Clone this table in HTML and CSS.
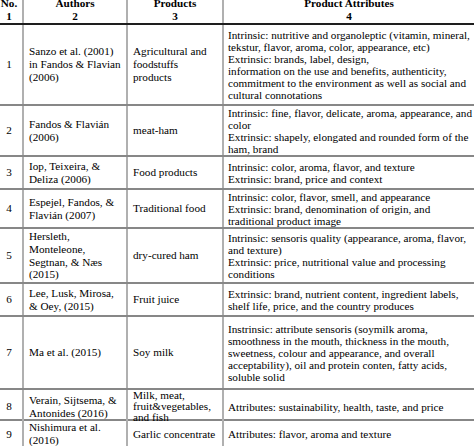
FILE: index.html
```html
<!DOCTYPE html>
<html>
<head>
<meta charset="utf-8">
<link rel="stylesheet" href="styles.css">
</head>
<body>
<div class="table">
  <div class="row head">
    <div class="cell num">No.<br>1</div>
    <div class="cell">Authors<br>2</div>
    <div class="cell">Products<br>3</div>
    <div class="cell">Product Attributes<br>4</div>
  </div>
  <div class="row r1">
    <div class="cell num">1</div>
    <div class="cell">Sanzo et al. (2001)<br>in Fandos &amp; Flavian<br>(2006)</div>
    <div class="cell">Agricultural and<br>foodstuffs<br>products</div>
    <div class="cell attr">Intrinsic: nutritive and organoleptic (vitamin, mineral,<br>tekstur, flavor, aroma, color, appearance, etc)<br>Extrinsic: brands, label, design,<br>information on the use and benefits, authenticity,<br>commitment to the environment as well as social and<br>cultural connotations</div>
  </div>
  <div class="row r2">
    <div class="cell num">2</div>
    <div class="cell">Fandos &amp; Flavián<br>(2006)</div>
    <div class="cell">meat-ham</div>
    <div class="cell attr">Intrinsic: fine, flavor, delicate, aroma, appearance, and<br>color<br>Extrinsic: shapely, elongated and rounded form of the<br>ham, brand</div>
  </div>
  <div class="row r3">
    <div class="cell num">3</div>
    <div class="cell">Iop, Teixeira, &amp;<br>Deliza (2006)</div>
    <div class="cell">Food products</div>
    <div class="cell attr">Intrinsic: color, aroma, flavor, and texture<br>Extrinsic: brand, price and context</div>
  </div>
  <div class="row r4">
    <div class="cell num">4</div>
    <div class="cell">Espejel, Fandos, &amp;<br>Flavián (2007)</div>
    <div class="cell">Traditional food</div>
    <div class="cell attr">Intrinsic: color, flavor, smell, and appearance<br>Extrinsic: brand, denomination of origin, and<br>traditional product image</div>
  </div>
  <div class="row r5">
    <div class="cell num">5</div>
    <div class="cell">Hersleth,<br>Monteleone,<br>Segtnan, &amp; Næs<br>(2015)</div>
    <div class="cell">dry-cured ham</div>
    <div class="cell attr">Intrinsic: sensoris quality (appearance, aroma, flavor,<br>and texture)<br>Extrinsic: price, nutritional value and processing<br>conditions</div>
  </div>
  <div class="row r6">
    <div class="cell num">6</div>
    <div class="cell">Lee, Lusk, Mirosa,<br>&amp; Oey, (2015)</div>
    <div class="cell">Fruit juice</div>
    <div class="cell attr">Extrinsic: brand, nutrient content, ingredient labels,<br>shelf life, price, and the country produces</div>
  </div>
  <div class="row r7">
    <div class="cell num">7</div>
    <div class="cell">Ma et al. (2015)</div>
    <div class="cell">Soy milk</div>
    <div class="cell attr">Instrinsic: attribute sensoris (soymilk aroma,<br>smoothness in the mouth, thickness in the mouth,<br>sweetness, colour and appearance, and overall<br>acceptability), oil and protein conten, fatty acids,<br>soluble solid</div>
  </div>
  <div class="row r8">
    <div class="cell num">8</div>
    <div class="cell">Verain, Sijtsema, &amp;<br>Antonides (2016)</div>
    <div class="cell tight">Milk, meat,<br>fruit&amp;vegetables,<br>and fish</div>
    <div class="cell attr">Attributes: sustainability, health, taste, and price</div>
  </div>
  <div class="row r9">
    <div class="cell num">9</div>
    <div class="cell">Nishimura et al.<br>(2016)</div>
    <div class="cell">Garlic concentrate</div>
    <div class="cell attr">Attributes: flavor, aroma and texture</div>
  </div>
</div>
</body>
</html>
```

FILE: styles.css
```css
html, body {
  margin: 0;
  padding: 0;
  background: #ffffff;
}

body {
  font-family: "Liberation Serif", "Times New Roman", serif;
  font-size: 11.2px;
  color: #000000;
  overflow: hidden;
}

.table {
  width: 474px;
  margin-top: -4px;
}

.row {
  display: grid;
  grid-template-columns: 22px 104px 96px 252px;
  box-sizing: border-box;
  border-bottom: 2px solid #878787;
}

.cell {
  display: flex;
  align-items: center;
  box-sizing: border-box;
  border-left: 2px solid #b0b0b0;
  padding-left: 5px;
  line-height: 12.8px;
  white-space: nowrap;
}

.cell.num {
  border-left: none;
  padding-left: 0;
  padding-right: 4px;
  justify-content: center;
  text-align: center;
}

.cell.attr {
  padding-left: 4px;
  line-height: 12px;
}

.cell.tight {
  line-height: 11px;
}

.head {
  height: 29px;
  border-bottom: 2px solid #1e1e1e;
}

.head .cell {
  font-weight: bold;
  justify-content: center;
  text-align: center;
  padding-left: 0;
  line-height: 13px;
}

.r1 { height: 81px; }
.r2 { height: 51px; }
.r3 { height: 33px; }
.r4 { height: 39px; }
.r5 { height: 55px; }
.r6 { height: 33px; }
.r7 { height: 73px; }
.r8 { height: 31px; }
.r9 { height: 28px; }
```
